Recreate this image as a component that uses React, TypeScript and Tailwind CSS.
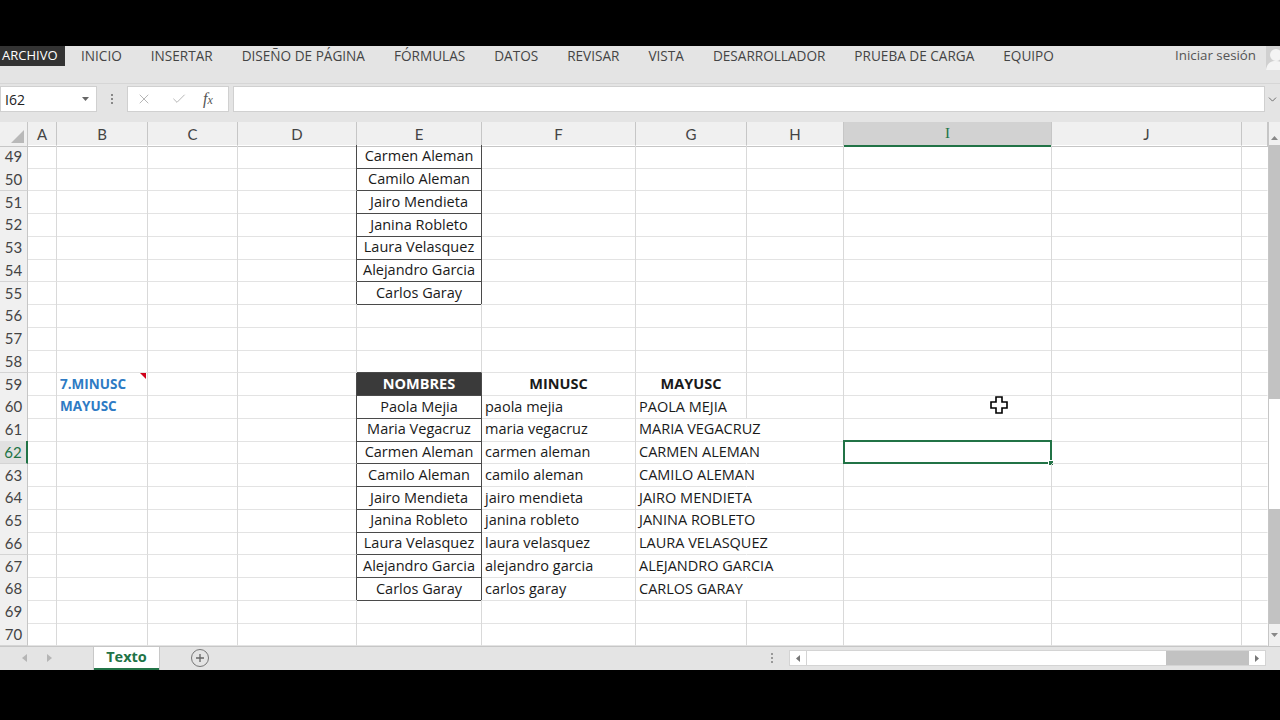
import React from 'react';
import { X, Check, ChevronDown } from 'lucide-react';

// Cell contents by row number
type RowData = { b?: string; e?: string; f?: string; g?: string };

const ROWS: Record<number, RowData> = {
    49: { e: 'Carmen Aleman' },
    50: { e: 'Camilo Aleman' },
    51: { e: 'Jairo Mendieta' },
    52: { e: 'Janina Robleto' },
    53: { e: 'Laura Velasquez' },
    54: { e: 'Alejandro Garcia' },
    55: { e: 'Carlos Garay' },
    59: { b: '7.MINUSC', e: 'NOMBRES', f: 'MINUSC', g: 'MAYUSC' },
    60: { b: 'MAYUSC', e: 'Paola Mejia', f: 'paola mejia', g: 'PAOLA MEJIA' },
    61: { e: 'Maria Vegacruz', f: 'maria vegacruz', g: 'MARIA VEGACRUZ' },
    62: { e: 'Carmen Aleman', f: 'carmen aleman', g: 'CARMEN ALEMAN' },
    63: { e: 'Camilo Aleman', f: 'camilo aleman', g: 'CAMILO ALEMAN' },
    64: { e: 'Jairo Mendieta', f: 'jairo mendieta', g: 'JAIRO MENDIETA' },
    65: { e: 'Janina Robleto', f: 'janina robleto', g: 'JANINA ROBLETO' },
    66: { e: 'Laura Velasquez', f: 'laura velasquez', g: 'LAURA VELASQUEZ' },
    67: { e: 'Alejandro Garcia', f: 'alejandro garcia', g: 'ALEJANDRO GARCIA' },
    68: { e: 'Carlos Garay', f: 'carlos garay', g: 'CARLOS GARAY' },
};

const MENU = ['INICIO', 'INSERTAR', 'DISEÑO DE PÁGINA', 'FÓRMULAS', 'DATOS', 'REVISAR', 'VISTA', 'DESARROLLADOR', 'PRUEBA DE CARGA', 'EQUIPO'];
const COLS = ['A', 'B', 'C', 'D', 'E', 'F', 'G', 'H', 'I', 'J', ''];
const ROW_NUMS = Array.from({ length: 22 }, (_, i) => 49 + i);

const GRID = 'grid grid-cols-[28px_29px_91px_90px_119px_125px_154px_111px_97px_208px_190px_26px]';
const CELL = 'relative border-r border-b flex items-center min-w-0';
const TEXT = "font-['Open_Sans',sans-serif] text-[14.5px] text-[#1a1a1a] whitespace-nowrap";
const GR = 'border-r-[#d9d9d9]';
const GB = 'border-b-[#e3e3e3]';
const DARK_R = 'border-r-[#4a4a4a]';
const DARK_B = 'border-b-[#4a4a4a]';

const isBoxed = (n: number) => (n >= 49 && n <= 55) || (n >= 59 && n <= 68);

const SheetRow: React.FC<{ n: number }> = ({ n }) => {
    const d = ROWS[n] || {};
    const boxed = isBoxed(n);
    const selected = n === 62;
    const gOverflow = n >= 61 && n <= 68;

    return (
        <div className={`${GRID} h-[22.75px]`}>
            {/* Row header */}
            <div className={`flex items-center justify-center border-b text-[15px] border-b-[#d4d4d4] ${selected ? 'bg-[#e1e1e1] text-[#217346] border-r-2 border-r-[#217346]' : 'bg-[#f0f0f0] text-[#444] border-r border-r-[#c6c6c6]'}`}>
                {n}
            </div>
            {/* A */}
            <div className={`${CELL} ${GR} ${GB}`} />
            {/* B */}
            <div className={`${CELL} ${GR} ${GB} pl-[3px] font-['Open_Sans',sans-serif] font-bold text-[13.5px] text-[#2e7bc4]`}>
                {d.b}
                {n === 59 && (
                    <span className="absolute right-[1px] top-0 w-0 h-0 border-l-[6px] border-l-transparent border-t-[6px] border-t-[#d0021b]" />
                )}
            </div>
            {/* C */}
            <div className={`${CELL} ${GR} ${GB}`} />
            {/* D */}
            <div className={`${CELL} ${boxed ? DARK_R : GR} ${GB}`} />
            {/* E */}
            <div
                className={`${CELL} ${TEXT} justify-center ${boxed ? DARK_R : GR} ${boxed || n === 58 ? DARK_B : GB} ${n === 59 ? 'bg-[#3a3a3a] text-white font-bold' : ''}`}
            >
                {d.e}
            </div>
            {/* F */}
            <div className={`${CELL} ${TEXT} ${GR} ${GB} ${n === 59 ? 'justify-center font-bold' : 'pl-[3px]'}`}>
                {d.f}
            </div>
            {/* G */}
            <div className={`${CELL} ${TEXT} ${gOverflow ? 'border-r-transparent' : GR} ${GB} ${n === 59 ? 'justify-center font-bold' : 'pl-[3px]'}`}>
                {d.g}
            </div>
            {/* H */}
            <div className={`${CELL} ${GR} ${GB}`} />
            {/* I */}
            <div className={`${CELL} ${GR} ${GB}`}>
                {selected && (
                    <>
                        <div className="absolute -left-[1px] -top-[1px] -right-[1px] -bottom-[1px] border-2 border-[#217346]" />
                        <div className="absolute -right-[3px] -bottom-[3px] w-[6px] h-[6px] bg-[#217346] border border-white" />
                    </>
                )}
            </div>
            {/* J */}
            <div className={`${CELL} ${GR} ${GB}`} />
            {/* K (partial) */}
            <div className={`${CELL} border-r-transparent ${GB}`} />
        </div>
    );
};

const App: React.FC = () => {
    return (
        <div className="w-[1280px] h-[720px] bg-black flex flex-col overflow-hidden font-['Lato',sans-serif]">
            <div className="h-[46px] shrink-0" />

            {/* Menu + formula bar */}
            <div className="bg-[#e4e4e4] shrink-0 font-['Open_Sans',sans-serif]">
                <div className="h-[20px] flex items-center text-[13.6px] text-[#444]">
                    <div className="h-full px-[2px] w-[65px] bg-[#333] text-white flex items-center text-[13px]">ARCHIVO</div>
                    <div className="flex items-center gap-[29px] ml-[16px]">
                        {MENU.map((m) => (
                            <span key={m}>{m}</span>
                        ))}
                    </div>
                    <div className="flex-1" />
                    <span className="text-[#555] text-[13.3px] mr-[10px]">Iniciar sesión</span>
                    <div className="w-[14px] h-[24px] self-start bg-[#d0d0d0] overflow-hidden relative">
                        <svg width="14" height="24" viewBox="0 0 14 24" className="absolute left-0 top-0">
                            <circle cx="10" cy="9" r="6" fill="#f4f4f4" />
                            <path d="M0 24 C1 17 5 15 10 15 C15 15 18 17 19 24 Z" fill="#f4f4f4" />
                        </svg>
                    </div>
                </div>
                <div className="h-[18px] border-b border-[#d6d6d6]" />

                {/* Formula bar */}
                <div className="h-[26px] mt-[2px] flex items-stretch">
                    <div className="w-[97px] bg-white border border-[#d0d0d0] flex items-center justify-between pl-[4px] pr-[7px] text-[14px] text-[#222]">
                        <span>I62</span>
                        <svg width="7" height="4" viewBox="0 0 7 4"><path d="M0 0 L7 0 L3.5 4 Z" fill="#666" /></svg>
                    </div>
                    <div className="w-[30px] flex items-center justify-center">
                        <div className="flex flex-col gap-[2px]">
                            <span className="w-[2px] h-[2px] bg-[#888]" />
                            <span className="w-[2px] h-[2px] bg-[#888]" />
                            <span className="w-[2px] h-[2px] bg-[#888]" />
                        </div>
                    </div>
                    <div className="w-[102px] bg-white border border-[#d0d0d0] flex items-center pl-[8px] text-[#aaa]">
                        <X className="w-[16px] h-[16px]" strokeWidth={1.3} />
                        <Check className="w-[16px] h-[16px] ml-[19px]" strokeWidth={1.3} />
                        <span className="ml-[16px] font-['Liberation_Serif',serif] italic text-[16px] text-[#555] leading-none">
                            f<span className="text-[12px]">x</span>
                        </span>
                    </div>
                    <div className="w-[4px]" />
                    <div className="w-[1032px] bg-white border border-[#d0d0d0]" />
                    <div className="flex-1 flex items-center justify-center text-[#555]">
                        <ChevronDown className="w-[13px] h-[13px]" strokeWidth={1.5} />
                    </div>
                </div>
                <div className="h-[10px]" />
            </div>

            {/* Sheet */}
            <div className="flex shrink-0 bg-white relative">
                <div className="w-[1268px]">
                    {/* Column headers */}
                    <div className={`${GRID} h-[23px] bg-[#f0f0f0] text-[15px] text-[#444]`}>
                        <div className="relative border-r border-b border-r-[#c6c6c6] border-b-[#c6c6c6]">
                            <span className="absolute right-[3px] bottom-[3px] w-0 h-0 border-l-[13px] border-l-transparent border-b-[13px] border-b-[#b9b9b9]" />
                        </div>
                        {COLS.map((c) => (
                            <div
                                key={c || 'K'}
                                className={`flex items-center justify-center border-r border-r-[#c6c6c6] ${c === 'I' ? "bg-[#d2d2d2] text-[#217346] border-b-2 border-b-[#217346] font-['Liberation_Serif',serif]" : 'border-b border-b-[#c6c6c6]'}`}
                            >
                                {c}
                            </div>
                        ))}
                    </div>
                    {ROW_NUMS.map((n) => (
                        <SheetRow key={n} n={n} />
                    ))}
                </div>

                {/* Vertical scrollbar */}
                <div className="w-[12px] flex flex-col border-l border-[#c6c6c6] bg-[#f0f0f0]">
                    <div className="h-[23px] flex items-end justify-center pb-[5px]">
                        <svg width="7" height="4" viewBox="0 0 7 4"><path d="M0 4 L7 4 L3.5 0 Z" fill="#888" /></svg>
                    </div>
                    <div className="h-[254px] bg-[#c2c2c2]" />
                    <div className="h-[110px] bg-white" />
                    <div className="h-[115px] bg-[#c2c2c2]" />
                    <div className="flex-1 flex items-center justify-center">
                        <svg width="7" height="4" viewBox="0 0 7 4"><path d="M0 0 L7 0 L3.5 4 Z" fill="#888" /></svg>
                    </div>
                </div>

                {/* Mouse cursor over the sheet */}
                <svg width="18" height="18" viewBox="0 0 18 18" className="absolute left-[990px] top-[274px]">
                    <path d="M6 1 H12 V6 H17 V12 H12 V17 H6 V12 H1 V6 H6 Z" fill="white" stroke="black" strokeWidth="1.6" />
                </svg>
            </div>

            {/* Sheet tabs + horizontal scrollbar */}
            <div className="h-[24px] shrink-0 bg-[#e4e4e4] border-t border-[#c6c6c6] flex items-stretch">
                <div className="w-[94px] flex items-center pl-[22px] gap-[20px]">
                    <svg width="5" height="8" viewBox="0 0 5 8"><path d="M5 0 L5 8 L0 4 Z" fill="#b5b5b5" /></svg>
                    <svg width="5" height="8" viewBox="0 0 5 8"><path d="M0 0 L0 8 L5 4 Z" fill="#b5b5b5" /></svg>
                </div>
                <div className="w-[65px] bg-white border-b-2 border-[#217346] flex items-center justify-center font-['Open_Sans',sans-serif] font-bold text-[14.5px] text-[#217346] shadow-[1px_0_0_#c8c8c8,-1px_0_0_#c8c8c8]">
                    Texto
                </div>
                <div className="w-[32px]" />
                <div className="flex items-center">
                    <div className="w-[18px] h-[18px] rounded-full border border-[#777] flex items-center justify-center">
                        <svg width="10" height="10" viewBox="0 0 10 10"><path d="M5 1 V9 M1 5 H9" stroke="#666" strokeWidth="1.3" /></svg>
                    </div>
                </div>
                <div className="flex-1" />
                <div className="w-[20px] mr-[7px] flex items-center justify-center">
                    <div className="flex flex-col gap-[2px]">
                        <span className="w-[2px] h-[2px] bg-[#999]" />
                        <span className="w-[2px] h-[2px] bg-[#999]" />
                        <span className="w-[2px] h-[2px] bg-[#999]" />
                    </div>
                </div>
                <div className="w-[477px] h-[16px] self-center flex border border-[#d4d4d4] bg-white">
                    <div className="w-[17px] flex items-center justify-center border-r border-[#d4d4d4]">
                        <svg width="4" height="7" viewBox="0 0 4 7"><path d="M4 0 L4 7 L0 3.5 Z" fill="#777" /></svg>
                    </div>
                    <div className="w-[359px]" />
                    <div className="w-[83px] bg-[#c2c2c2]" />
                    <div className="flex-1 flex items-center justify-center">
                        <svg width="4" height="7" viewBox="0 0 4 7"><path d="M0 0 L0 7 L4 3.5 Z" fill="#777" /></svg>
                    </div>
                </div>
                <div className="w-[14px]" />
            </div>

            <div className="flex-1 bg-black" />
        </div>
    );
};

export default App;
